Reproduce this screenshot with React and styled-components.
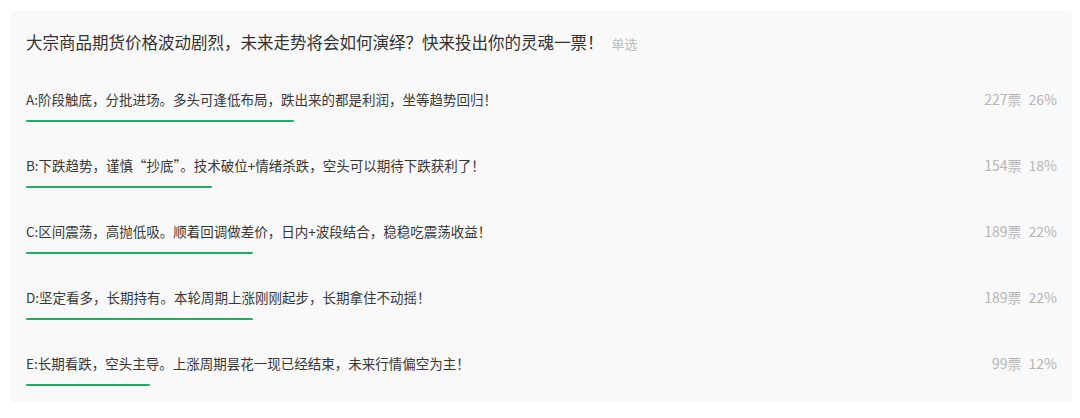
import React from 'react';
import styled, { createGlobalStyle } from 'styled-components';

const GlobalStyle = createGlobalStyle`
  body {
    margin: 0;
    background: #ffffff;
    font-family: "Noto Sans CJK SC", "Noto Sans", sans-serif;
  }
`;

const Card = styled.section`
  margin: 11px 8px 0 10px;
  width: 1062px;
  box-sizing: border-box;
  padding: 20px 15px 16px 16px;
  background: #f9f9f9;
  border-radius: 4px;
`;

const Title = styled.div`
  display: flex;
  align-items: baseline;
  font-size: 16.5px;
  line-height: 22px;
  color: #333333;
  margin-bottom: 34px;
`;

const Tag = styled.span`
  margin-left: 8px;
  font-size: 13px;
  color: #bdbdbd;
`;

const Option = styled.div`
  & + & {
    margin-top: 33px;
  }
`;

const Row = styled.div`
  display: flex;
  justify-content: space-between;
  align-items: center;
  height: 20px;
  font-size: 13.5px;
  color: #383838;
`;

const Stats = styled.span`
  display: flex;
  gap: 7px;
  color: #b5b5b5;
  font-size: 14px;
`;

const Bar = styled.div`
  margin-top: 11px;
  height: 2px;
  background: #1fae63;
  border-radius: 1px;
`;

const options = [
  { text: 'A:阶段触底，分批进场。多头可逢低布局，跌出来的都是利润，坐等趋势回归！', votes: 227, pct: 26 },
  { text: 'B:下跌趋势，谨慎“抄底”。技术破位+情绪杀跌，空头可以期待下跌获利了！', votes: 154, pct: 18 },
  { text: 'C:区间震荡，高抛低吸。顺着回调做差价，日内+波段结合，稳稳吃震荡收益！', votes: 189, pct: 22 },
  { text: 'D:坚定看多，长期持有。本轮周期上涨刚刚起步，长期拿住不动摇！', votes: 189, pct: 22 },
  { text: 'E:长期看跌，空头主导。上涨周期昙花一现已经结束，未来行情偏空为主！', votes: 99, pct: 12 },
];

function App() {
  return (
    <>
      <GlobalStyle />
      <Card>
        <Title>
          大宗商品期货价格波动剧烈，未来走势将会如何演绎？快来投出你的灵魂一票！
          <Tag>单选</Tag>
        </Title>
        {options.map(opt => (
          <Option key={opt.text}>
            <Row>
              <span>{opt.text}</span>
              <Stats>
                <span>{opt.votes}票</span>
                <span>{opt.pct}%</span>
              </Stats>
            </Row>
            <Bar style={{ width: `${opt.pct}%` }} />
          </Option>
        ))}
      </Card>
    </>
  );
}

export default App;
